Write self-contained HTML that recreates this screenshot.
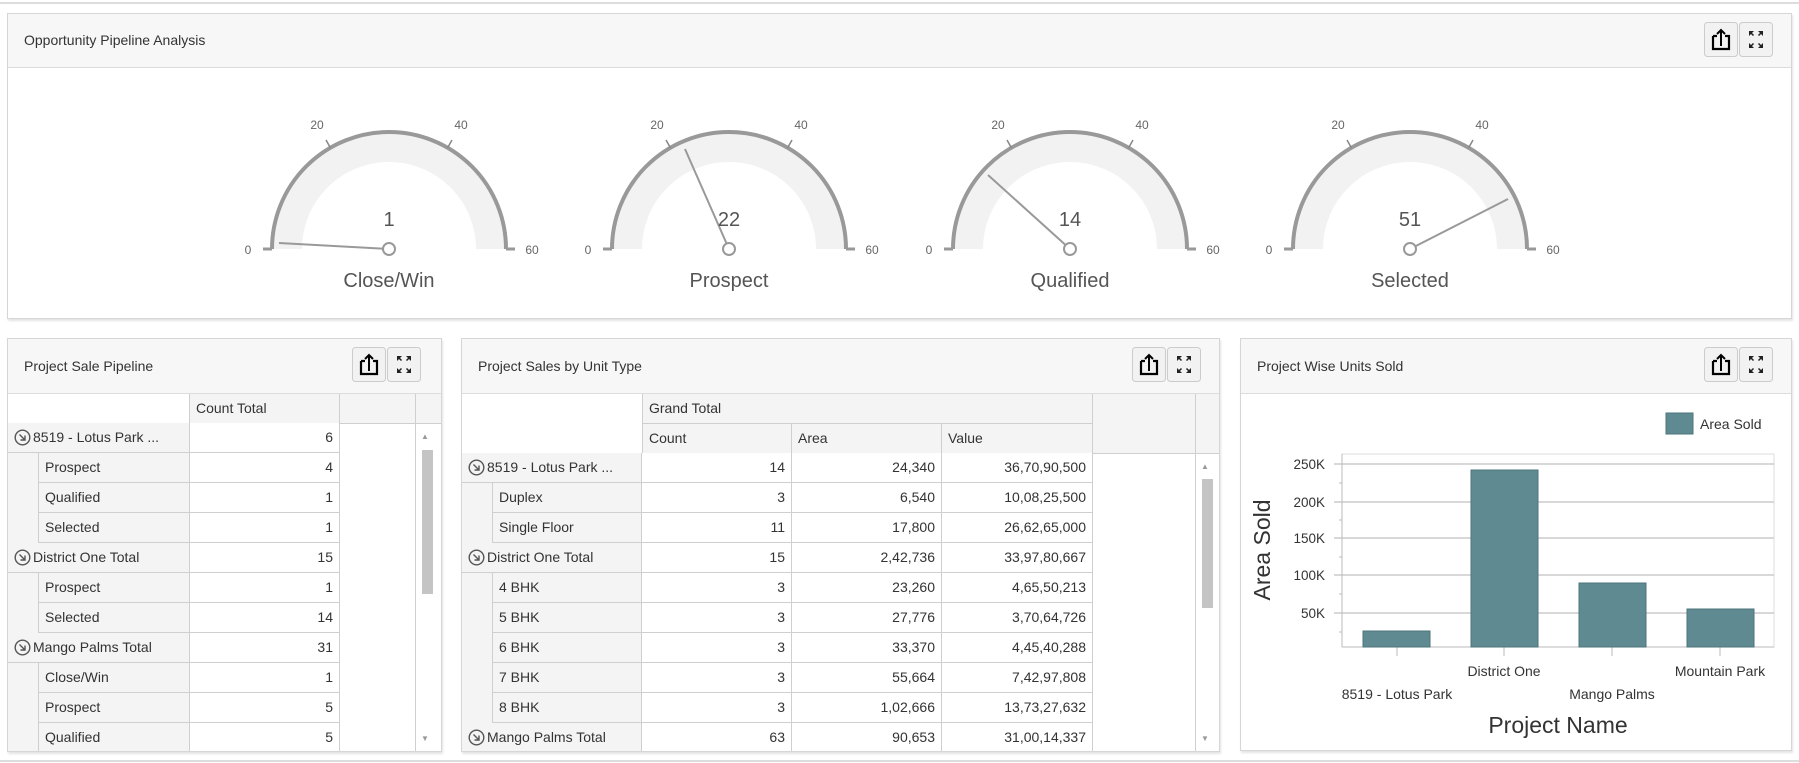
<!DOCTYPE html>
<html><head><meta charset="utf-8"><style>
*{box-sizing:border-box;margin:0;padding:0}
body{width:1799px;height:763px;background:#fff;font-family:"Liberation Sans",sans-serif;color:#333;position:relative;overflow:hidden}
.abs{position:absolute}
.panel{position:absolute;border:1px solid #d6d6d6;background:#fff;box-shadow:1px 2px 2px #e4e4e4}
.hdr{position:absolute;left:0;right:0;top:0;background:#f7f7f7;border-bottom:1px solid #dcdcdc}
.ttl{position:absolute;left:16px;font-size:14px;color:#333}
.c{position:absolute;height:30px;border-right:1px solid #cfcfcf;border-bottom:1px solid #cfcfcf;font-size:14px;line-height:29px;padding:0 6px;white-space:nowrap;overflow:hidden}
.h{background:#f4f4f4}
.r{text-align:right;background:#fff}
.ic{display:inline-block;width:17px;height:17px;vertical-align:-4px;margin-right:2px}
</style></head><body>
<svg width="0" height="0" style="position:absolute"><defs>
<symbol id="ico" viewBox="0 0 17 17"><circle cx="8.5" cy="8.5" r="7.3" fill="none" stroke="#555" stroke-width="1.4"/><path d="M5.5 5.5 L11 11 M11 6.5 V11 H6.5" fill="none" stroke="#555" stroke-width="1.4"/></symbol>
</defs></svg>
<div class="abs" style="left:0;top:2px;width:1799px;height:2px;background:#ddd"></div>
<div class="abs" style="left:0;top:760px;width:1799px;height:2px;background:#ddd"></div>

<div class="panel" style="left:7px;top:13px;width:1785px;height:306px">
 <div class="hdr" style="height:54px"><div class="ttl" style="top:18px">Opportunity Pipeline Analysis</div></div>
</div>
<svg class="abs" style="left:0;top:0" width="1799" height="330" font-family="Liberation Sans, sans-serif">
 <g id="g1" transform="translate(389,249)">
  <path d="M-115 0 A115 115 0 0 1 115 0 L87 0 A87 87 0 0 0 -87 0 Z" fill="#f2f2f2"/>
  <path d="M-117 0 A117 117 0 0 1 117 0" fill="none" stroke="#999" stroke-width="4"/>
  <line x1="-126" y1="0" x2="-117" y2="0" stroke="#999" stroke-width="3"/><line x1="117" y1="0" x2="126" y2="0" stroke="#999" stroke-width="3"/>
  <line x1="-58.5" y1="-101" x2="-63" y2="-109" stroke="#888" stroke-width="1.5"/><line x1="58.5" y1="-101" x2="63" y2="-109" stroke="#888" stroke-width="1.5"/>
  <text x="-141" y="5" font-size="12" fill="#666" text-anchor="middle">0</text><text x="143" y="5" font-size="12" fill="#666" text-anchor="middle">60</text>
  <text x="-72" y="-120" font-size="12" fill="#666" text-anchor="middle">20</text><text x="72" y="-120" font-size="12" fill="#666" text-anchor="middle">40</text>
 </g>
 <use href="#g1" x="340"/><use href="#g1" x="681"/><use href="#g1" x="1021"/>
 <g stroke="#999" stroke-width="2" fill="#fff">
  <line x1="389" y1="249" x2="279" y2="243"/><circle cx="389" cy="249" r="6"/>
  <line x1="729" y1="249" x2="685" y2="149"/><circle cx="729" cy="249" r="6"/>
  <line x1="1070" y1="249" x2="988" y2="175"/><circle cx="1070" cy="249" r="6"/>
  <line x1="1410" y1="249" x2="1508" y2="199"/><circle cx="1410" cy="249" r="6"/>
 </g>
 <g font-size="20" fill="#555" text-anchor="middle">
  <text x="389" y="226">1</text><text x="729" y="226">22</text><text x="1070" y="226">14</text><text x="1410" y="226">51</text>
 </g>
 <g font-size="20" fill="#555" text-anchor="middle">
  <text x="389" y="287">Close/Win</text><text x="729" y="287">Prospect</text><text x="1070" y="287">Qualified</text><text x="1410" y="287">Selected</text>
 </g>
</svg>

<div class="panel" style="left:7px;top:338px;width:435px;height:414px"><div class="hdr" style="height:55px"><div class="ttl" style="top:19px">Project Sale Pipeline</div></div></div>
<div class="panel" style="left:461px;top:338px;width:759px;height:414px"><div class="hdr" style="height:55px"><div class="ttl" style="top:19px">Project Sales by Unit Type</div></div></div>
<div class="panel" style="left:1240px;top:338px;width:552px;height:413px"><div class="hdr" style="height:55px"><div class="ttl" style="top:19px">Project Wise Units Sold</div></div></div>

<svg class="abs" style="left:0;top:0" width="1799" height="400">
 <defs>
  <g id="bp">
   <rect x="0.5" y="0.5" width="33" height="34" rx="3" fill="#f2f2f2" stroke="#ccc"/>
   <path d="M9 14 H13 M21 14 H25 V27 H9 V14" fill="none" stroke="#000" stroke-width="2.2"/>
   <path d="M17 24 V8 M13 12 L17 8 L21 12" fill="none" stroke="#000" stroke-width="2"/>
   <rect x="35.5" y="0.5" width="33" height="34" rx="3" fill="#f2f2f2" stroke="#ccc"/>
   <g fill="#222"><path d="M45 9 h5 l-5 5z"/><path d="M59 9 h-5 l5 5z"/><path d="M45 26 h5 l-5 -5z"/><path d="M59 26 h-5 l5 -5z"/></g>
   <g stroke="#222" stroke-width="1.5"><path d="M46 10 L49.5 13.5 M58 10 L54.5 13.5 M46 25 L49.5 21.5 M58 25 L54.5 21.5"/></g>
  </g>
 </defs>
 <use href="#bp" x="1704" y="22"/>
 <use href="#bp" x="352" y="347"/>
 <use href="#bp" x="1132" y="347"/>
 <use href="#bp" x="1704" y="347"/>
</svg>

<div class="abs" style="left:8px;top:394px;width:433px;height:357px;overflow:hidden;background:#fff">
 <div class="c" style="left:181px;top:0;width:151px;background:#f4f4f4;border-left:1px solid #cfcfcf">Count Total</div>
 <div class="c" style="left:332px;top:0;width:76px;background:#f4f4f4"></div>
 <div class="c" style="left:408px;top:0;width:25px;background:#f4f4f4;border-right:none"></div>
 <div class="abs" style="left:0;top:0;width:181px;height:30px;background:#fff;border-bottom:1px solid #e8e8e8"></div>
 <div class="abs" style="left:0;top:30px;width:30px;height:330px;background:#f4f4f4"></div>
 <div class="c h" style="left:0;top:29px;width:182px"><svg class="ic"><use href="#ico"/></svg>8519 - Lotus Park ...</div><div class="c r" style="left:182px;top:29px;width:150px">6</div>
 <div class="c h" style="left:30px;top:59px;width:152px;border-left:1px solid #cfcfcf">Prospect</div><div class="c r" style="left:182px;top:59px;width:150px">4</div>
 <div class="c h" style="left:30px;top:89px;width:152px;border-left:1px solid #cfcfcf">Qualified</div><div class="c r" style="left:182px;top:89px;width:150px">1</div>
 <div class="c h" style="left:30px;top:119px;width:152px;border-left:1px solid #cfcfcf">Selected</div><div class="c r" style="left:182px;top:119px;width:150px">1</div>
 <div class="c h" style="left:0;top:149px;width:182px"><svg class="ic"><use href="#ico"/></svg>District One Total</div><div class="c r" style="left:182px;top:149px;width:150px">15</div>
 <div class="c h" style="left:30px;top:179px;width:152px;border-left:1px solid #cfcfcf">Prospect</div><div class="c r" style="left:182px;top:179px;width:150px">1</div>
 <div class="c h" style="left:30px;top:209px;width:152px;border-left:1px solid #cfcfcf">Selected</div><div class="c r" style="left:182px;top:209px;width:150px">14</div>
 <div class="c h" style="left:0;top:239px;width:182px"><svg class="ic"><use href="#ico"/></svg>Mango Palms Total</div><div class="c r" style="left:182px;top:239px;width:150px">31</div>
 <div class="c h" style="left:30px;top:269px;width:152px;border-left:1px solid #cfcfcf">Close/Win</div><div class="c r" style="left:182px;top:269px;width:150px">1</div>
 <div class="c h" style="left:30px;top:299px;width:152px;border-left:1px solid #cfcfcf">Prospect</div><div class="c r" style="left:182px;top:299px;width:150px">5</div>
 <div class="c h" style="left:30px;top:329px;width:152px;border-left:1px solid #cfcfcf">Qualified</div><div class="c r" style="left:182px;top:329px;width:150px">5</div>
 <div class="abs" style="left:407px;top:30px;width:1px;height:330px;background:#cfcfcf"></div>
 <div class="abs" style="left:413px;top:38px;font-size:8px;color:#999">▲</div>
 <div class="abs" style="left:413px;top:340px;font-size:8px;color:#999">▼</div>
 <div class="abs" style="left:414px;top:56px;width:11px;height:144px;background:#c4c4c4"></div>
</div>

<div class="abs" style="left:462px;top:394px;width:757px;height:357px;overflow:hidden;background:#fff">
 <div class="c" style="left:180px;top:0;width:451px;background:#f4f4f4;border-left:1px solid #cfcfcf">Grand Total</div>
 <div class="c" style="left:631px;top:0;width:103px;height:60px;background:#f4f4f4"></div>
 <div class="c" style="left:734px;top:0;width:23px;height:60px;background:#f4f4f4;border-right:none"></div>
 <div class="c" style="left:180px;top:30px;width:150px;background:#f4f4f4;border-left:1px solid #cfcfcf">Count</div>
 <div class="c" style="left:330px;top:30px;width:150px;background:#f4f4f4">Area</div>
 <div class="c" style="left:480px;top:30px;width:151px;background:#f4f4f4">Value</div>
 <div class="abs" style="left:0;top:60px;width:30px;height:300px;background:#f4f4f4"></div>
 <div class="c h" style="left:0;top:59px;width:180px"><svg class="ic"><use href="#ico"/></svg>8519 - Lotus Park ...</div><div class="c r" style="left:180px;top:59px;width:150px">14</div><div class="c r" style="left:330px;top:59px;width:150px">24,340</div><div class="c r" style="left:480px;top:59px;width:151px">36,70,90,500</div>
 <div class="c h" style="left:30px;top:89px;width:150px;border-left:1px solid #cfcfcf">Duplex</div><div class="c r" style="left:180px;top:89px;width:150px">3</div><div class="c r" style="left:330px;top:89px;width:150px">6,540</div><div class="c r" style="left:480px;top:89px;width:151px">10,08,25,500</div>
 <div class="c h" style="left:30px;top:119px;width:150px;border-left:1px solid #cfcfcf">Single Floor</div><div class="c r" style="left:180px;top:119px;width:150px">11</div><div class="c r" style="left:330px;top:119px;width:150px">17,800</div><div class="c r" style="left:480px;top:119px;width:151px">26,62,65,000</div>
 <div class="c h" style="left:0;top:149px;width:180px"><svg class="ic"><use href="#ico"/></svg>District One Total</div><div class="c r" style="left:180px;top:149px;width:150px">15</div><div class="c r" style="left:330px;top:149px;width:150px">2,42,736</div><div class="c r" style="left:480px;top:149px;width:151px">33,97,80,667</div>
 <div class="c h" style="left:30px;top:179px;width:150px;border-left:1px solid #cfcfcf">4 BHK</div><div class="c r" style="left:180px;top:179px;width:150px">3</div><div class="c r" style="left:330px;top:179px;width:150px">23,260</div><div class="c r" style="left:480px;top:179px;width:151px">4,65,50,213</div>
 <div class="c h" style="left:30px;top:209px;width:150px;border-left:1px solid #cfcfcf">5 BHK</div><div class="c r" style="left:180px;top:209px;width:150px">3</div><div class="c r" style="left:330px;top:209px;width:150px">27,776</div><div class="c r" style="left:480px;top:209px;width:151px">3,70,64,726</div>
 <div class="c h" style="left:30px;top:239px;width:150px;border-left:1px solid #cfcfcf">6 BHK</div><div class="c r" style="left:180px;top:239px;width:150px">3</div><div class="c r" style="left:330px;top:239px;width:150px">33,370</div><div class="c r" style="left:480px;top:239px;width:151px">4,45,40,288</div>
 <div class="c h" style="left:30px;top:269px;width:150px;border-left:1px solid #cfcfcf">7 BHK</div><div class="c r" style="left:180px;top:269px;width:150px">3</div><div class="c r" style="left:330px;top:269px;width:150px">55,664</div><div class="c r" style="left:480px;top:269px;width:151px">7,42,97,808</div>
 <div class="c h" style="left:30px;top:299px;width:150px;border-left:1px solid #cfcfcf">8 BHK</div><div class="c r" style="left:180px;top:299px;width:150px">3</div><div class="c r" style="left:330px;top:299px;width:150px">1,02,666</div><div class="c r" style="left:480px;top:299px;width:151px">13,73,27,632</div>
 <div class="c h" style="left:0;top:329px;width:180px"><svg class="ic"><use href="#ico"/></svg>Mango Palms Total</div><div class="c r" style="left:180px;top:329px;width:150px">63</div><div class="c r" style="left:330px;top:329px;width:150px">90,653</div><div class="c r" style="left:480px;top:329px;width:151px">31,00,14,337</div>
 <div class="abs" style="left:733px;top:60px;width:1px;height:300px;background:#cfcfcf"></div>
 <div class="abs" style="left:739px;top:68px;font-size:8px;color:#999">▲</div>
 <div class="abs" style="left:739px;top:340px;font-size:8px;color:#999">▼</div>
 <div class="abs" style="left:740px;top:85px;width:11px;height:129px;background:#c4c4c4"></div>
</div>

<svg class="abs" style="left:0;top:0" width="1799" height="763" font-family="Liberation Sans, sans-serif">
 <rect x="1666" y="413" width="27" height="21" fill="#5f8a91" stroke="#4d767c"/>
 <text x="1700" y="429" font-size="14" fill="#333">Area Sold</text>
 <rect x="1342" y="454" width="432" height="193" fill="none" stroke="#ddd"/>
 <g stroke="#ccc" stroke-width="1.5">
  <line x1="1334" y1="464" x2="1774" y2="464"/><line x1="1334" y1="502" x2="1774" y2="502"/><line x1="1334" y1="538" x2="1774" y2="538"/><line x1="1334" y1="575" x2="1774" y2="575"/><line x1="1334" y1="613" x2="1774" y2="613"/>
 </g>
 <line x1="1342" y1="454" x2="1342" y2="647" stroke="#bbb"/>
 <line x1="1342" y1="647" x2="1774" y2="647" stroke="#bbb"/>
 <g stroke="#bbb"><line x1="1339" y1="483" x2="1342" y2="483"/><line x1="1339" y1="520" x2="1342" y2="520"/><line x1="1339" y1="557" x2="1342" y2="557"/><line x1="1339" y1="594" x2="1342" y2="594"/><line x1="1339" y1="632" x2="1342" y2="632"/>
  <line x1="1397" y1="647" x2="1397" y2="656"/><line x1="1504" y1="647" x2="1504" y2="656"/><line x1="1612" y1="647" x2="1612" y2="656"/><line x1="1720" y1="647" x2="1720" y2="656"/></g>
 <g font-size="13.5" fill="#333" text-anchor="end">
  <text x="1325" y="469">250K</text><text x="1325" y="507">200K</text><text x="1325" y="543">150K</text><text x="1325" y="580">100K</text><text x="1325" y="618">50K</text>
 </g>
 <g fill="#5f8a91" stroke="#4d767c">
  <rect x="1363" y="631" width="67" height="16"/><rect x="1471" y="470" width="67" height="177"/><rect x="1579" y="583" width="67" height="64"/><rect x="1687" y="609" width="67" height="38"/>
 </g>
 <g font-size="14" fill="#333" text-anchor="middle">
  <text x="1504" y="676">District One</text><text x="1720" y="676">Mountain Park</text>
  <text x="1397" y="699">8519 - Lotus Park</text><text x="1612" y="699">Mango Palms</text>
 </g>
 <text x="1558" y="733" font-size="23" fill="#333" text-anchor="middle">Project Name</text>
 <text transform="translate(1270,550) rotate(-90)" font-size="23" fill="#333" text-anchor="middle">Area Sold</text>
</svg>
</body></html>
